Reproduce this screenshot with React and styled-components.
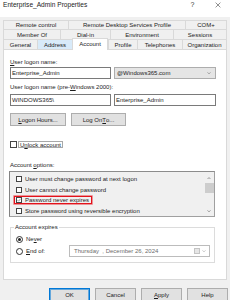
import React from 'react';
import styled, { createGlobalStyle } from 'styled-components';

const Global = createGlobalStyle`
  html, body { margin: 0; padding: 0; background: #f0f0f0; }
  body { font-family: "Liberation Sans", Arial, sans-serif; font-size: 6px; color: #1c1c1c; }
  *, *::before, *::after { box-sizing: border-box; }
  u { text-underline-offset: 1px; }
`;

const Dialog = styled.div`
  width: 230px;
  height: 300px;
  overflow: hidden;
  background: #f0f0f0;
  display: flex;
  flex-direction: column;
`;

const TitleBar = styled.div`
  height: 17px;
  flex: none;
  background: #fff;
  display: flex;
  align-items: flex-start;
  padding: 1px 0 0 3px;
`;

const Title = styled.div`
  flex: 1;
  font-size: 6.6px;
  line-height: 8px;
  white-space: nowrap;
`;

const TitleButton = styled.div`
  width: 25px;
  height: 8px;
  display: flex;
  align-items: center;
  justify-content: center;
  font-size: 7px;
  line-height: 8px;
  color: #333;
`;

const TabStrip = styled.div`
  margin-top: 3px;
  padding: 0 3px;
  display: flex;
  flex-direction: column;
  flex: none;
`;

const TabRow = styled.div`
  display: flex;
  height: ${p => p.$h}px;
`;

const Tab = styled.div`
  flex: none;
  width: ${p => p.$w}px;
  height: 100%;
  display: flex;
  align-items: center;
  justify-content: center;
  white-space: nowrap;
  line-height: 8px;
  background: ${p => (p.$hover ? '#d8eaf9' : '#f0f0f0')};
  border-top: 1px solid #d9d9d9;
  border-left: 1px solid #d9d9d9;
  &:last-child { border-right: 1px solid #d9d9d9; }
`;

const ActiveTab = styled(Tab)`
  background: #fff;
  height: 12px;
  margin-top: -1px;
  margin-bottom: -1px;
  border-right: 1px solid #d9d9d9;
  position: relative;
  z-index: 1;
  padding-bottom: 1px;
`;

const Panel = styled.div`
  margin: 0 3px;
  height: 231px;
  flex: none;
  background: #fff;
  border: 1px solid #d9d9d9;
  padding: 0 10px 0 6px;
  display: flex;
  flex-direction: column;
`;

const Label = styled.div`
  margin-top: ${p => p.$mt}px;
  height: 8px;
  line-height: 8px;
  white-space: nowrap;
`;

const FieldRow = styled.div`
  margin-top: ${p => p.$mt}px;
  display: grid;
  grid-template-columns: 101px 102px;
  column-gap: 3px;
  height: 12px;
`;

const TextBox = styled.div`
  height: 12px;
  border: 1px solid #7a7a7a;
  background: #fff;
  padding-left: 1px;
  display: flex;
  align-items: center;
  white-space: pre;
`;

const ComboBox = styled.div`
  height: 12px;
  border: 1px solid #adadad;
  background: #e5e5e5;
  padding: 0 4px 0 2px;
  display: flex;
  align-items: center;
  justify-content: space-between;
`;

const ButtonRow = styled.div`
  margin-top: ${p => p.$mt}px;
  display: flex;
  gap: 5px;
`;

const PushButton = styled.div`
  width: ${p => p.$w}px;
  height: ${p => p.$h}px;
  flex: none;
  background: #e1e1e1;
  border: 1px solid ${p => (p.$default ? '#0078d7' : '#adadad')};
  box-shadow: ${p => (p.$default ? 'inset 0 0 0 1px rgba(0,120,215,0.55)' : 'none')};
  display: flex;
  align-items: center;
  justify-content: center;
  white-space: nowrap;
`;

const CheckRow = styled.div`
  margin-top: ${p => p.$mt}px;
  height: 7px;
  display: flex;
  align-items: center;
  gap: 1px;
`;

const Box = styled.div`
  width: ${p => p.$s}px;
  height: ${p => p.$s}px;
  flex: none;
  border: 1px solid #444;
  background: #fff;
  display: flex;
  align-items: center;
  justify-content: center;
`;

const FocusText = styled.div`
  height: 7px;
  border: 1px solid #a8a8a8;
  padding: 0 1px;
  display: flex;
  align-items: center;
  line-height: 6px;
  white-space: nowrap;
`;

const ListBox = styled.div`
  margin-top: ${p => p.$mt}px;
  margin-left: -1px;
  width: 206px;
  height: 46px;
  flex: none;
  border: 1px solid #a0a0a0;
  border-left-color: #828282;
  border-top-color: #8c8c8c;
  background: #f0f0f0;
  display: flex;
`;

const Items = styled.div`
  flex: 1;
  padding-top: 2px;
  display: flex;
  flex-direction: column;
`;

const ItemRow = styled.div`
  height: 10.5px;
  display: flex;
  align-items: center;
  padding-left: 4px;
`;

const Item = styled.div`
  height: 8px;
  display: inline-flex;
  align-items: center;
  gap: 3px;
  padding: 0 2px 0 1px;
  border: 1px solid ${p => (p.$mark ? '#e3121b' : 'transparent')};
  box-shadow: ${p => (p.$mark ? '0 0 0 0.7px rgba(227,18,27,0.6)' : 'none')};
  white-space: nowrap;
  line-height: 6px;
`;

const ScrollBar = styled.div`
  width: 10px;
  flex: none;
  background: #f0f0f0;
  display: flex;
  flex-direction: column;
  align-items: center;
`;

const ScrollArrow = styled.div`
  height: ${p => p.$h}px;
  width: 100%;
  display: flex;
  justify-content: center;
  align-items: ${p => (p.$up ? 'flex-end' : 'flex-start')};
  padding: ${p => (p.$up ? '0 0 3px' : '2px 0 0')};
`;

const Track = styled.div`
  flex: 1;
  width: 100%;
  padding: 1px 0 0;
  display: flex;
  justify-content: center;
`;

const Thumb = styled.div`
  width: 9px;
  height: 10px;
  background: #cdcdcd;
`;

const Group = styled.div`
  margin-top: ${p => p.$mt}px;
  width: 205px;
  height: 36px;
  flex: none;
  border: 1px solid #dcdcdc;
  position: relative;
  padding: 7px 0 0 5px;
  display: flex;
  flex-direction: column;
`;

const Legend = styled.div`
  position: absolute;
  top: -5px;
  left: 3px;
  padding: 0 1px;
  background: #fff;
  line-height: 8px;
  white-space: nowrap;
`;

const RadioRow = styled.div`
  margin-top: ${p => p.$mt}px;
  height: ${p => p.$h}px;
  display: flex;
  align-items: center;
  gap: 3px;
  white-space: nowrap;
`;

const RadioLabel = styled.div`
  width: 50px;
  display: flex;
  align-items: center;
  gap: 3px;
`;

const Radio = styled.div`
  width: 7px;
  height: 7px;
  flex: none;
  border-radius: 50%;
  border: 1px solid #333;
  background: #fff;
  display: flex;
  align-items: center;
  justify-content: center;
  &::after {
    content: '';
    width: 3px;
    height: 3px;
    border-radius: 50%;
    background: ${p => (p.$on ? '#222' : 'transparent')};
  }
`;

const DatePicker = styled.div`
  width: 141px;
  height: 12px;
  border: 1px solid #bcbcbc;
  background: #fff;
  color: #6d6d6d;
  padding: 0 3px 0 4px;
  display: flex;
  align-items: center;
  white-space: pre;
`;

const DateIcons = styled.div`
  margin-left: auto;
  display: flex;
  align-items: center;
  gap: 2px;
`;

const CalIcon = styled.div`
  width: 6px;
  height: 6px;
  border: 1px solid #c4c4c4;
  background: #e6e6e6;
`;

const Footer = styled.div`
  margin-top: 8px;
  padding-right: 2px;
  display: flex;
  justify-content: flex-end;
  gap: 5px;
`;

const Chevron = ({ up, color = '#606060', w = 4 }) => (
  <svg width={w} height={w * 0.6} viewBox="0 0 8 5" style={{ display: 'block' }}>
    <path d={up ? 'M1 4.2 L4 1.2 L7 4.2' : 'M1 0.8 L4 3.8 L7 0.8'} fill="none" stroke={color} strokeWidth="1.3" />
  </svg>
);

const Check = () => (
  <svg width="4" height="4" viewBox="0 0 8 8" style={{ display: 'block' }}>
    <path d="M1 4.2 L3.2 6.4 L7 1.6" fill="none" stroke="#777" strokeWidth="1.4" />
  </svg>
);

const CloseX = () => (
  <svg width="6" height="6" viewBox="0 0 10 10" style={{ display: 'block' }}>
    <path d="M1 1 L9 9 M9 1 L1 9" stroke="#333" strokeWidth="0.9" />
  </svg>
);

const rows = [
  { h: 9, tabs: [['Remote control', 65], ['Remote Desktop Services Profile', 117], ['COM+', 42]] },
  { h: 10, tabs: [['Member Of', 57], ['Dial-in', 50], ['Environment', 63], ['Sessions', 54]] },
];

const bottomTabs = [
  ['General', 34], ['Address', 35, 'hover'], ['Account', 36, 'active'],
  ['Profile', 29], ['Telephones', 45], ['Organization', 45],
];

const options = [
  { text: 'User must change password at next logon' },
  { text: 'User cannot change password' },
  { text: 'Password never expires', checked: true, mark: true },
  { text: 'Store password using reversible encryption' },
];

export default function App() {
  return (
    <>
      <Global />
      <Dialog>
        <TitleBar>
          <Title>Enterprise_Admin Properties</Title>
          <TitleButton>?</TitleButton>
          <TitleButton><CloseX /></TitleButton>
        </TitleBar>

        <TabStrip>
          {rows.map((r, i) => (
            <TabRow key={i} $h={r.h}>
              {r.tabs.map(([t, w]) => (
                <Tab key={t} $w={w}>{t}</Tab>
              ))}
            </TabRow>
          ))}
          <TabRow $h={10}>
            {bottomTabs.map(([t, w, s]) =>
              s === 'active' ? (
                <ActiveTab key={t} $w={w}>{t}</ActiveTab>
              ) : (
                <Tab key={t} $w={w} $hover={s === 'hover'}>{t}</Tab>
              )
            )}
          </TabRow>
        </TabStrip>

        <Panel>
          <Label $mt={8}><u>U</u>ser logon name:</Label>
          <FieldRow $mt={1}>
            <TextBox>Enterprise_Admin</TextBox>
            <ComboBox>
              <span>@Windows365.com</span>
              <Chevron color="#707070" />
            </ComboBox>
          </FieldRow>

          <Label $mt={4}>User logon name (pre-<u>W</u>indows 2000):</Label>
          <FieldRow $mt={3}>
            <TextBox>WINDOWS365\</TextBox>
            <TextBox>Enterprise_Admin</TextBox>
          </FieldRow>

          <ButtonRow $mt={7}>
            <PushButton $w={56} $h={13}><u>L</u>ogon Hours...</PushButton>
            <PushButton $w={55} $h={13}>Log On <u>T</u>o...</PushButton>
          </ButtonRow>

          <CheckRow $mt={15}>
            <Box $s={7} />
            <FocusText>U<u>n</u>lock account</FocusText>
          </CheckRow>

          <Label $mt={13}>Account <u>o</u>ptions:</Label>
          <ListBox $mt={2}>
            <Items>
              {options.map(o => (
                <ItemRow key={o.text}>
                  <Item $mark={o.mark}>
                    <Box $s={6}>{o.checked && <Check />}</Box>
                    {o.text}
                  </Item>
                </ItemRow>
              ))}
            </Items>
            <ScrollBar>
              <ScrollArrow $h={10} $up><Chevron up /></ScrollArrow>
              <Track><Thumb /></Track>
              <ScrollArrow $h={8}><Chevron /></ScrollArrow>
            </ScrollBar>
          </ListBox>

          <Group $mt={10}>
            <Legend>Account expires</Legend>
            <RadioRow $h={8}>
              <Radio $on />
              <span>Ne<u>v</u>er</span>
            </RadioRow>
            <RadioRow $mt={2} $h={12}>
              <RadioLabel>
                <Radio />
                <span><u>E</u>nd of:</span>
              </RadioLabel>
              <DatePicker>
                {'Thursday  , December 26, 2024'}
                <DateIcons>
                  <CalIcon />
                  <Chevron color="#a0a0a0" />
                </DateIcons>
              </DatePicker>
            </RadioRow>
          </Group>
        </Panel>

        <Footer>
          <PushButton $w={41} $h={14} $default>OK</PushButton>
          <PushButton $w={41} $h={14}>Cancel</PushButton>
          <PushButton $w={41} $h={14}><u>A</u>pply</PushButton>
          <PushButton $w={41} $h={14}>Help</PushButton>
        </Footer>
      </Dialog>
    </>
  );
}
